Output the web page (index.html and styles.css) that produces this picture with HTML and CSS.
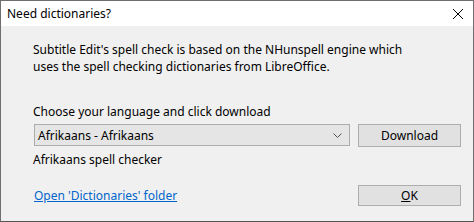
FILE: index.html
```html
<!DOCTYPE html>
<html lang="en">
  <head>
    <meta charset="UTF-8" />
    <title>Need dictionaries?</title>
    <link rel="stylesheet" href="styles.css">
  </head>
  <body>
    <div class="window">
      <div class="titlebar">
        <span class="title">Need dictionaries?</span>
        <span class="close">
          <svg width="12" height="12" viewBox="0 0 12 12">
            <path d="M1 1 L11 11 M11 1 L1 11" stroke="#000" stroke-width="1" fill="none" />
          </svg>
        </span>
      </div>

      <div class="content">
        <p class="intro">
          Subtitle Edit's spell check is based on the NHunspell engine which<br />
          uses the spell checking dictionaries from LibreOffice.
        </p>

        <div class="label">Choose your language and click download</div>

        <div class="row">
          <div class="combo">
            <span>Afrikaans - Afrikaans</span>
            <svg width="9" height="5" viewBox="0 0 9 5">
              <path d="M0.5 0.5 L4.5 4.5 L8.5 0.5" stroke="#555" stroke-width="1" fill="none" />
            </svg>
          </div>
          <button class="btn btn-download">Download</button>
        </div>

        <div class="desc">Afrikaans spell checker</div>

        <div class="footer">
          <a class="link" href="#">Open 'Dictionaries' folder</a>
          <button class="btn btn-ok"><u>O</u>K</button>
        </div>
      </div>
    </div>
  </body>
</html>
```

FILE: styles.css
```css
body,
html {
  margin: 0;
  padding: 0;
  background-color: #3a3a3a;
  font-family: "Noto Sans", "Open Sans", sans-serif;
  font-size: 12px;
  color: #000;
}

.window {
  width: 474px;
  height: 222px;
  box-sizing: border-box;
  border: 1px solid #6e6e6e;
  border-bottom-color: #555;
  background-color: #f0f0f0;
  display: flex;
  flex-direction: column;
}

.titlebar {
  height: 25px;
  background-color: #fff;
  display: flex;
  align-items: center;
  justify-content: space-between;
  padding-left: 6px;
  padding-right: 9px;
}

.title {
  font-size: 12px;
}

.close {
  display: flex;
}

.content {
  flex: 1;
  padding: 15px 12px 0 32px;
  display: flex;
  flex-direction: column;
}

.intro {
  margin: 0;
  line-height: 17px;
}

.label {
  margin-top: 28px;
  line-height: 17px;
}

.row {
  display: flex;
  gap: 8px;
  margin-top: 4px;
  margin-left: 1px;
}

.combo {
  width: 316px;
  flex-shrink: 0;
  height: 22px;
  box-sizing: border-box;
  border: 1px solid #adadad;
  background-color: #e5e5e5;
  display: flex;
  align-items: center;
  justify-content: space-between;
  padding: 0 7px 0 3px;
}

.btn {
  width: 103px;
  height: 23px;
  box-sizing: border-box;
  border: 1px solid #adadad;
  background-color: #e1e1e1;
  font-family: inherit;
  font-size: 12px;
  color: #000;
  padding: 0;
}

.btn-ok {
  height: 21px;
}

.desc {
  margin-top: 4px;
  line-height: 17px;
}

.footer {
  margin-top: 17px;
  margin-left: 1px;
  display: flex;
  align-items: center;
  justify-content: space-between;
}

.link {
  color: #0066cc;
  text-decoration: underline;
}
```
